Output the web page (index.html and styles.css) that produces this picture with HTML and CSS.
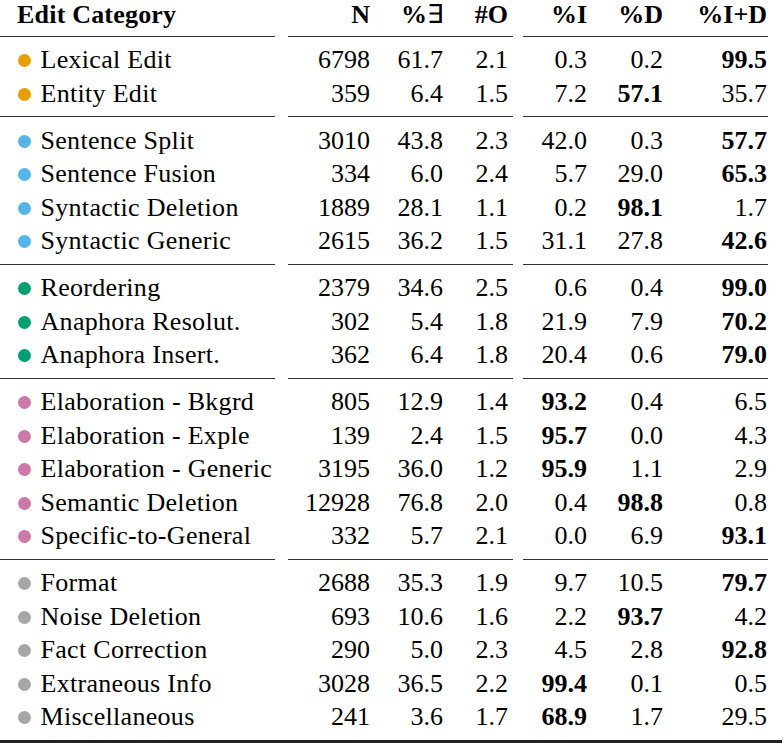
FILE: index.html
```html
<!DOCTYPE html>
<html lang="en">
<head>
<meta charset="utf-8">
<title>Edit Categories</title>
<link rel="stylesheet" href="styles.css">
</head>
<body>
<div class="table">
  <div class="row head">
    <div class="cat">Edit Category</div>
    <div class="c-n">N</div>
    <div class="c-e">%<span class="ex">∃</span></div>
    <div class="c-o">#O</div>
    <div class="c-i">%I</div>
    <div class="c-d">%D</div>
    <div class="c-id">%I+D</div>
  </div>
  <div class="sep"><div class="seg seg-a"></div><div class="seg seg-b"></div><div class="seg seg-c"></div></div>

  <div class="row"><div class="cat"><span class="dot lex"></span><span class="lbl">Lexical Edit</span></div><div class="c-n">6798</div><div class="c-e">61.7</div><div class="c-o">2.1</div><div class="c-i">0.3</div><div class="c-d">0.2</div><div class="c-id"><b>99.5</b></div></div>
  <div class="row"><div class="cat"><span class="dot lex"></span><span class="lbl">Entity Edit</span></div><div class="c-n">359</div><div class="c-e">6.4</div><div class="c-o">1.5</div><div class="c-i">7.2</div><div class="c-d"><b>57.1</b></div><div class="c-id">35.7</div></div>
  <div class="sep"><div class="seg seg-a"></div><div class="seg seg-b"></div><div class="seg seg-c"></div></div>

  <div class="row"><div class="cat"><span class="dot syn"></span><span class="lbl">Sentence Split</span></div><div class="c-n">3010</div><div class="c-e">43.8</div><div class="c-o">2.3</div><div class="c-i">42.0</div><div class="c-d">0.3</div><div class="c-id"><b>57.7</b></div></div>
  <div class="row"><div class="cat"><span class="dot syn"></span><span class="lbl">Sentence Fusion</span></div><div class="c-n">334</div><div class="c-e">6.0</div><div class="c-o">2.4</div><div class="c-i">5.7</div><div class="c-d">29.0</div><div class="c-id"><b>65.3</b></div></div>
  <div class="row"><div class="cat"><span class="dot syn"></span><span class="lbl">Syntactic Deletion</span></div><div class="c-n">1889</div><div class="c-e">28.1</div><div class="c-o">1.1</div><div class="c-i">0.2</div><div class="c-d"><b>98.1</b></div><div class="c-id">1.7</div></div>
  <div class="row"><div class="cat"><span class="dot syn"></span><span class="lbl">Syntactic Generic</span></div><div class="c-n">2615</div><div class="c-e">36.2</div><div class="c-o">1.5</div><div class="c-i">31.1</div><div class="c-d">27.8</div><div class="c-id"><b>42.6</b></div></div>
  <div class="sep"><div class="seg seg-a"></div><div class="seg seg-b"></div><div class="seg seg-c"></div></div>

  <div class="row"><div class="cat"><span class="dot dis"></span><span class="lbl">Reordering</span></div><div class="c-n">2379</div><div class="c-e">34.6</div><div class="c-o">2.5</div><div class="c-i">0.6</div><div class="c-d">0.4</div><div class="c-id"><b>99.0</b></div></div>
  <div class="row"><div class="cat"><span class="dot dis"></span><span class="lbl">Anaphora Resolut.</span></div><div class="c-n">302</div><div class="c-e">5.4</div><div class="c-o">1.8</div><div class="c-i">21.9</div><div class="c-d">7.9</div><div class="c-id"><b>70.2</b></div></div>
  <div class="row"><div class="cat"><span class="dot dis"></span><span class="lbl">Anaphora Insert.</span></div><div class="c-n">362</div><div class="c-e">6.4</div><div class="c-o">1.8</div><div class="c-i">20.4</div><div class="c-d">0.6</div><div class="c-id"><b>79.0</b></div></div>
  <div class="sep"><div class="seg seg-a"></div><div class="seg seg-b"></div><div class="seg seg-c"></div></div>

  <div class="row"><div class="cat"><span class="dot sem"></span><span class="lbl">Elaboration - Bkgrd</span></div><div class="c-n">805</div><div class="c-e">12.9</div><div class="c-o">1.4</div><div class="c-i"><b>93.2</b></div><div class="c-d">0.4</div><div class="c-id">6.5</div></div>
  <div class="row"><div class="cat"><span class="dot sem"></span><span class="lbl">Elaboration - Exple</span></div><div class="c-n">139</div><div class="c-e">2.4</div><div class="c-o">1.5</div><div class="c-i"><b>95.7</b></div><div class="c-d">0.0</div><div class="c-id">4.3</div></div>
  <div class="row"><div class="cat"><span class="dot sem"></span><span class="lbl">Elaboration - Generic</span></div><div class="c-n">3195</div><div class="c-e">36.0</div><div class="c-o">1.2</div><div class="c-i"><b>95.9</b></div><div class="c-d">1.1</div><div class="c-id">2.9</div></div>
  <div class="row"><div class="cat"><span class="dot sem"></span><span class="lbl">Semantic Deletion</span></div><div class="c-n">12928</div><div class="c-e">76.8</div><div class="c-o">2.0</div><div class="c-i">0.4</div><div class="c-d"><b>98.8</b></div><div class="c-id">0.8</div></div>
  <div class="row"><div class="cat"><span class="dot sem"></span><span class="lbl">Specific-to-General</span></div><div class="c-n">332</div><div class="c-e">5.7</div><div class="c-o">2.1</div><div class="c-i">0.0</div><div class="c-d">6.9</div><div class="c-id"><b>93.1</b></div></div>
  <div class="sep"><div class="seg seg-a"></div><div class="seg seg-b"></div><div class="seg seg-c"></div></div>

  <div class="row"><div class="cat"><span class="dot oth"></span><span class="lbl">Format</span></div><div class="c-n">2688</div><div class="c-e">35.3</div><div class="c-o">1.9</div><div class="c-i">9.7</div><div class="c-d">10.5</div><div class="c-id"><b>79.7</b></div></div>
  <div class="row"><div class="cat"><span class="dot oth"></span><span class="lbl">Noise Deletion</span></div><div class="c-n">693</div><div class="c-e">10.6</div><div class="c-o">1.6</div><div class="c-i">2.2</div><div class="c-d"><b>93.7</b></div><div class="c-id">4.2</div></div>
  <div class="row"><div class="cat"><span class="dot oth"></span><span class="lbl">Fact Correction</span></div><div class="c-n">290</div><div class="c-e">5.0</div><div class="c-o">2.3</div><div class="c-i">4.5</div><div class="c-d">2.8</div><div class="c-id"><b>92.8</b></div></div>
  <div class="row"><div class="cat"><span class="dot oth"></span><span class="lbl">Extraneous Info</span></div><div class="c-n">3028</div><div class="c-e">36.5</div><div class="c-o">2.2</div><div class="c-i"><b>99.4</b></div><div class="c-d">0.1</div><div class="c-id">0.5</div></div>
  <div class="row"><div class="cat"><span class="dot oth"></span><span class="lbl">Miscellaneous</span></div><div class="c-n">241</div><div class="c-e">3.6</div><div class="c-o">1.7</div><div class="c-i"><b>68.9</b></div><div class="c-d">1.7</div><div class="c-id">29.5</div></div>
  <div class="bottom"><div class="bottom-rule"></div></div>
</div>
</body>
</html>
```

FILE: styles.css
```css
html, body {
  margin: 0;
  padding: 0;
  background: #ffffff;
}

body {
  font-family: "Liberation Serif", "Times New Roman", Times, serif;
  font-size: 26px;
  color: #000000;
}

.table {
  display: flex;
  flex-direction: column;
  width: 783px;
  overflow: hidden;
}

.row,
.sep {
  display: grid;
  grid-template-columns: 275px 13px 82px 73px 70px 10px 64px 76px 105px 15px;
}

.row {
  height: 33.5px;
  line-height: 33.5px;
  white-space: nowrap;
}

.row.head {
  height: 29.5px;
  line-height: 29.5px;
  font-weight: bold;
}

.row.head .cat {
  letter-spacing: 0.2px;
}

.row.head .ex {
  font-weight: normal;
}

.cat {
  grid-column: 1;
  padding-left: 17px;
}

.lbl {
  letter-spacing: 0.3px;
}

.c-n, .c-e, .c-o, .c-i, .c-d, .c-id {
  text-align: right;
}

.c-n { grid-column: 3; }
.c-e { grid-column: 4; }
.c-o { grid-column: 5; padding-right: 5px; }
.c-i { grid-column: 7; }
.c-d { grid-column: 8; }
.c-id { grid-column: 9; padding-right: 1px; }

.dot {
  display: inline-block;
  width: 13px;
  height: 13px;
  border-radius: 50%;
  margin-left: 1px;
  margin-right: 9.5px;
  vertical-align: 1px;
}

.dot.lex { background: #e69f00; }
.dot.syn { background: #56b4e9; }
.dot.dis { background: #009e73; }
.dot.sem { background: #cc79a7; }
.dot.oth { background: #a6a6a6; }

.sep {
  padding: 6px 0 6.5px;
}

.seg {
  height: 1px;
  background: #333333;
}

.seg-a { grid-column: 1; }
.seg-b { grid-column: 3 / 6; }
.seg-c { grid-column: 7 / 10; }

.bottom {
  padding-top: 6.5px;
}

.bottom-rule {
  height: 2.5px;
  background: #222222;
  width: 782px;
}
```
